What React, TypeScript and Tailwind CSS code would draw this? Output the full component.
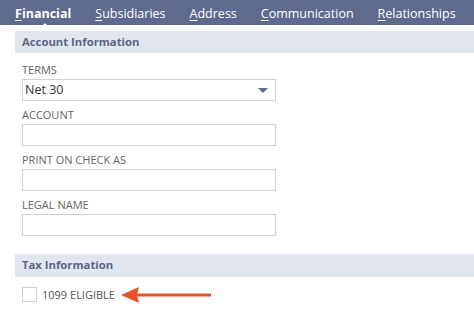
import React from "react";

const tabs = [
  { first: "F", rest: "inancial", active: true },
  { first: "S", rest: "ubsidiaries" },
  { first: "A", rest: "ddress" },
  { first: "C", rest: "ommunication" },
  { first: "R", rest: "elationships" },
];

function Field({ label, children }: { label: string; children?: React.ReactNode }) {
  return (
    <div className="flex flex-col">
      <div className="h-[13px] text-[11px] leading-[13px] text-[#666666]">{label}</div>
      <div className="mt-[3px] flex h-[22px] w-[254px] items-center border border-[#d0d0d0] bg-white px-[2px]">
        {children}
      </div>
    </div>
  );
}

export default function App() {
  return (
    <div className="h-[319px] w-[474px] overflow-hidden bg-white font-['Open_Sans',sans-serif]">
      {/* tab strip */}
      <div className="relative flex h-[25px] items-center gap-[24px] bg-[#5e6a8e] pl-[15px] pt-[3px] text-[12.5px] text-white">
        {tabs.map((t) => (
          <span key={t.first} className={t.active ? "relative font-bold" : ""}>
            <span className="underline underline-offset-2">{t.first}</span>
            {t.rest}
            {t.active && (
              <span className="absolute left-[25px] top-[18px] h-0 w-0 border-x-[5px] border-b-[5px] border-x-transparent border-b-white" />
            )}
          </span>
        ))}
      </div>

      <div className="pl-[15px] pt-[6px]">
        <div className="flex h-[22px] items-center bg-[#e1e5ee] pl-[7px] text-[11.3px] font-bold text-[#5b6586]">
          Account Information
        </div>

        <div className="flex flex-col gap-[7px] pl-[7px] pt-[10px]">
          <Field label="TERMS">
            <span className="flex-1 text-[12.5px] text-[#333333]">Net 30</span>
            <span className="mr-[5px] h-0 w-0 border-x-[5px] border-t-[5px] border-x-transparent border-t-[#5e6a8e]" />
          </Field>
          <Field label="ACCOUNT" />
          <Field label="PRINT ON CHECK AS" />
          <Field label="LEGAL NAME" />
        </div>

        <div className="mt-[18px] flex h-[23px] items-center bg-[#e1e5ee] pl-[7px] text-[11.3px] font-bold text-[#5b6586]">
          Tax Information
        </div>

        <div className="flex items-center pl-[7px] pt-[7px]">
          <span className="h-[15px] w-[15px] border border-[#cfcfcf] bg-white" />
          <span className="ml-[5px] mt-[3px] text-[11px] text-[#555555]">1099 ELIGIBLE</span>
          <svg width="92" height="18" viewBox="0 0 92 18" className="ml-[6px] mt-[2px]">
            <path d="M0 9 L18 1 L16 9 L18 17 Z" fill="#e8512a" />
            <rect x="14" y="7.5" width="76" height="3" fill="#e8512a" />
          </svg>
        </div>
      </div>
    </div>
  );
}
